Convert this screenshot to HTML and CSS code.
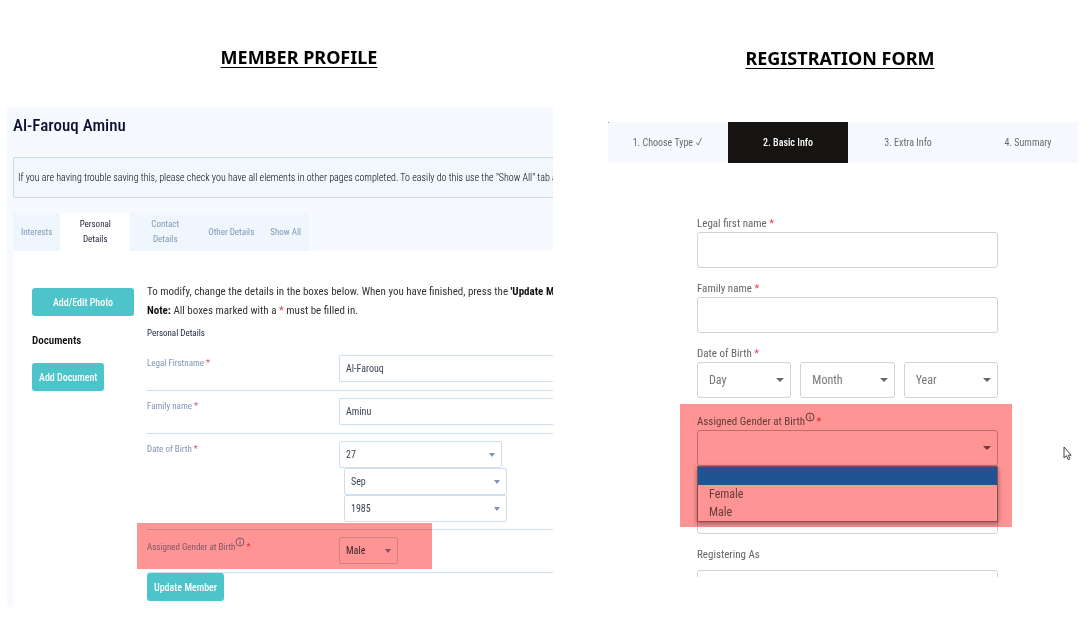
FILE: index.html
```html
<!DOCTYPE html>
<html lang="en">

<head>
    <meta charset="utf-8">
    <meta name="viewport" content="width=device-width, initial-scale=1.0">
    <title>Member profile and registration form</title>
    <link rel="stylesheet" href="styles.css">
</head>

<body>
    <main class="page">

        <section class="profile">
            <h1 class="heading">MEMBER PROFILE</h1>
            <div class="panel">
                <h2>Al-Farouq Aminu</h2>
                <p class="notice">If you are having trouble saving this, please check you have all elements in other pages completed. To easily do this use the "Show All" tab a</p>
                <nav class="tabs">
                    <button class="tab">Interests</button>
                    <button class="tab tab-wide active">Personal Details</button>
                    <button class="tab tab-wide">Contact Details</button>
                    <button class="tab">Other Details</button>
                    <button class="tab">Show All</button>
                </nav>

                <div class="content">
                    <aside class="side">
                        <button class="btn btn-photo">Add/Edit Photo</button>
                        <h3>Documents</h3>
                        <button class="btn">Add Document</button>
                    </aside>

                    <form class="details">
                        <p class="intro">To modify, change the details in the boxes below. When you have finished, press the <b>'Update M</b></p>
                        <p class="intro"><b>Note:</b> All boxes marked with a <span class="req">*</span> must be filled in.</p>
                        <h4>Personal Details</h4>

                        <div class="row">
                            <label for="firstname">Legal Firstname <span class="req">*</span></label>
                            <input class="box" id="firstname" type="text" value="Al-Farouq">
                        </div>
                        <div class="row">
                            <label for="familyname">Family name <span class="req">*</span></label>
                            <input class="box" id="familyname" type="text" value="Aminu">
                        </div>
                        <div class="row">
                            <label for="birthday">Date of Birth <span class="req">*</span></label>
                            <div class="dates">
                                <div class="select">
                                    <select class="box" id="birthday"><option>27</option></select>
                                </div>
                                <div class="select indent">
                                    <select class="box" aria-label="Month of birth"><option>Sep</option></select>
                                </div>
                                <div class="select indent">
                                    <select class="box" aria-label="Year of birth"><option>1985</option></select>
                                </div>
                            </div>
                        </div>
                        <div class="row marked">
                            <label for="gender">Assigned Gender at Birth<svg class="info" viewBox="0 0 10 10"><circle cx="5" cy="5" r="4" /><path d="M5 4.3v3.2M5 2.4v1" /></svg> <span class="req">*</span></label>
                            <div class="select small">
                                <select class="box" id="gender"><option>Male</option></select>
                            </div>
                        </div>
                        <button class="btn" type="button">Update Member</button>
                    </form>
                </div>
            </div>
        </section>

        <section class="register">
            <h1 class="heading">REGISTRATION FORM</h1>
            <nav class="steps">
                <a href="#type">1. Choose Type <svg class="tick" viewBox="0 0 8 10"><path d="M1 6l2 3 4-8" /></svg></a>
                <a href="#basic" class="current">2. Basic Info</a>
                <a href="#extra">3. Extra Info</a>
                <a href="#summary">4. Summary</a>
            </nav>

            <form class="fields">
                <div class="field">
                    <label for="regfirst">Legal first name <span class="req">*</span></label>
                    <input class="control" id="regfirst" type="text">
                </div>
                <div class="field">
                    <label for="regfamily">Family name <span class="req">*</span></label>
                    <input class="control" id="regfamily" type="text">
                </div>
                <div class="field">
                    <label for="regday">Date of Birth <span class="req">*</span></label>
                    <div class="triple">
                        <div class="select">
                            <select class="control" id="regday"><option>Day</option></select>
                        </div>
                        <div class="select">
                            <select class="control" aria-label="Month"><option>Month</option></select>
                        </div>
                        <div class="select">
                            <select class="control" aria-label="Year"><option>Year</option></select>
                        </div>
                    </div>
                </div>
                <div class="field marked">
                    <label for="reggender">Assigned Gender at Birth<svg class="info" viewBox="0 0 10 10"><circle cx="5" cy="5" r="4" /><path d="M5 4.3v3.2M5 2.4v1" /></svg> <span class="req">*</span></label>
                    <div class="select">
                        <select class="control" id="reggender"><option></option></select>
                    </div>
                    <ul class="options" role="listbox" aria-label="Gender">
                        <li class="chosen" role="option" aria-selected="true"></li>
                        <li role="option">Female</li>
                        <li role="option">Male</li>
                    </ul>
                </div>
                <div class="field covered">
                    <input class="control" type="text" aria-label="Next field">
                </div>
                <div class="field last">
                    <label for="regas">Registering As</label>
                    <div class="cut">
                        <input class="control" id="regas" type="text">
                    </div>
                </div>
            </form>
        </section>

    </main>

    <svg class="cursor" viewBox="0 0 9 15">
        <path d="M1 1v11l2.500-2.300 1.700 4 1.700-.8-1.700-3.700h3z" />
    </svg>
</body>

</html>
```
FILE: styles.css
```css
* {
    box-sizing: border-box;
}

body {
    margin: 0;
    background-color: white;
    font-family: 'Roboto Condensed', 'Liberation Sans Narrow', Roboto, sans-serif;
    color: #333;
}

h1, h2, h3, h4, p, ul {
    margin: 0;
    padding: 0;
}

button, input, select {
    font-family: inherit;
}

.page {
    display: grid;
    grid-template-columns: 546fr 470fr;
    gap: 55px;
    padding: 0 12px 0 7px;
}

.profile, .register {
    min-width: 0;
}

.heading {
    padding-top: 44px;
    font-family: 'Noto Sans', sans-serif;
    font-size: 18px;
    font-weight: 700;
    line-height: 26px;
    text-align: center;
    text-decoration: underline;
    text-decoration-thickness: 1px;
    text-underline-offset: 3px;
    color: black;
}

.profile .heading {
    padding-left: 38px;
}

.req {
    color: #e0485a;
}

.info {
    width: 10px;
    height: 10px;
    margin: -4px -1px 0 0;
    vertical-align: 3px;
    fill: none;
    stroke: currentColor;
}

/* member profile */

.panel {
    margin-top: 37px;
    padding-left: 6px;
    background-color: #f6fafe;
    overflow: hidden;
}

h2 {
    padding-top: 6px;
    font-size: 17px;
    font-weight: 500;
    line-height: 24px;
    color: #0d1233;
}

.notice {
    margin: 20px -20px 15px 0;
    padding: 10px 4px;
    border: 1px solid #cbd9e8;
    border-radius: 2px;
    background-color: #f0f7fd;
    font-size: 10px;
    font-weight: 300;
    line-height: 19px;
    white-space: nowrap;
    color: black;
}

.tabs {
    display: flex;
    height: 38px;
}

.tab {
    padding: 0 8px;
    border: none;
    background-color: #eff6fd;
    font-size: 9px;
    line-height: 15px;
    color: #8298b8;
}

.tab-wide {
    width: 70px;
    padding: 0 16px;
}

.tab.active {
    background-color: white;
    color: #222a3c;
}

.content {
    display: flex;
    gap: 13px;
    padding: 31px 0 6px 19px;
    background-color: white;
}

.side {
    flex: 0 0 102px;
    padding-top: 6px;
}

.btn {
    height: 28px;
    padding: 0 7px;
    border: none;
    border-radius: 3px;
    background-color: #4dc4c9;
    font-size: 10px;
    font-weight: 500;
    color: white;
}

.btn-photo {
    width: 100%;
}

h3 {
    margin: 15px 0 13px;
    font-size: 11px;
    line-height: 19px;
    font-weight: 600;
    color: #111;
}

.details {
    flex: 1;
    min-width: 0;
}

.intro {
    font-size: 11px;
    line-height: 19px;
    white-space: nowrap;
}

.intro b {
    color: #111;
}

h4 {
    margin: 4px 0 5px;
    font-size: 9px;
    font-weight: 400;
    line-height: 19px;
    color: #1d2440;
}

.row {
    display: flex;
    align-items: flex-start;
    min-height: 43px;
    padding: 7px 0;
    border-bottom: 1px solid #cfdfee;
}

.row label {
    flex: 0 0 192px;
    font-size: 9px;
    line-height: 16px;
    color: #7f95b7;
}

.row.marked label {
    padding-top: 2px;
}

.box {
    display: block;
    width: 100%;
    height: 27px;
    padding: 0 6px;
    border: 1px solid #cfdfee;
    border-radius: 2px;
    background-color: white;
    font-size: 10px;
    color: #3c4453;
    appearance: none;
}

.row > .box {
    flex: 1;
    border-right: none;
    border-radius: 2px 0 0 2px;
}

.select {
    position: relative;
}

.select::after {
    content: "";
    position: absolute;
    top: 12px;
    right: 7px;
    border: 3px solid transparent;
    border-top: 4px solid #7b91b5;
    border-bottom: none;
    pointer-events: none;
}

.dates {
    width: 168px;
}

.dates .select {
    width: 163px;
}

.dates .indent {
    margin-left: 5px;
}

.small {
    width: 59px;
}

/* red marker laid over a question */
.marked {
    position: relative;
}

.marked::after {
    content: "";
    position: absolute;
    background-color: #ff9494;
    mix-blend-mode: multiply;
    pointer-events: none;
}

.row.marked::after {
    top: -7px;
    bottom: 3px;
    left: -10px;
    width: 295px;
}

/* registration form */

.register .heading {
    padding-top: 45px;
    padding-right: 6px;
}

.steps {
    position: relative;
    display: flex;
    margin-top: 51px;
    overflow: hidden;
    background-color: #f6fafe;
}

.steps::before {
    content: "";
    position: absolute;
    width: 1px;
    height: 1px;
    background-color: #2cc5b8;
}

.steps a {
    flex: 0 0 120px;
    padding-top: 1px;
    font-size: 10px;
    line-height: 40px;
    text-align: center;
    text-decoration: none;
    color: #6b6b6b;
}

.steps .current {
    background-color: #161412;
    font-weight: 500;
    color: white;
}

.tick {
    width: 8px;
    height: 9px;
    fill: none;
    stroke: currentColor;
}

.fields {
    padding: 53px 80px 0 89px;
}

.field {
    margin-bottom: 13px;
}

.field label {
    display: block;
    font-size: 11px;
    line-height: 16px;
    color: #666;
}

.control {
    display: block;
    width: 100%;
    height: 36px;
    padding: 0 11px;
    border: 1px solid #d2d2d2;
    border-radius: 3px;
    background-color: white;
    font-size: 12px;
    color: #777;
    appearance: none;
}

.triple {
    display: grid;
    grid-template-columns: repeat(3, 1fr);
    gap: 9px;
}

.field .select::after {
    top: 16px;
    border-width: 4px 4px 0;
    border-top-color: #666;
}

.field.marked {
    margin: 16px 0 32px;
}

.field.marked::after {
    top: -10px;
    right: -14px;
    left: -17px;
    height: 123px;
    z-index: 2;
}

.marked .control {
    border-color: #bbb;
}

.options {
    position: absolute;
    top: 52px;
    left: 0;
    right: 0;
    z-index: 1;
    border: 1px solid #888;
    background-color: white;
    box-shadow: 0 2px 5px rgba(0, 0, 0, .4);
    font-size: 12px;
    line-height: 18px;
    color: #666;
    list-style: none;
}

.options li {
    height: 18px;
    padding-left: 11px;
}

.options .chosen {
    background-color: #1e90ff;
}

.covered {
    margin-bottom: 13px;
}

.last label {
    margin-bottom: 7px;
}

.cut {
    height: 7px;
    overflow: hidden;
}

.cursor {
    position: absolute;
    top: 446px;
    right: 18px;
    width: 9px;
    height: 15px;
    fill: white;
    stroke: #444;
}
```
